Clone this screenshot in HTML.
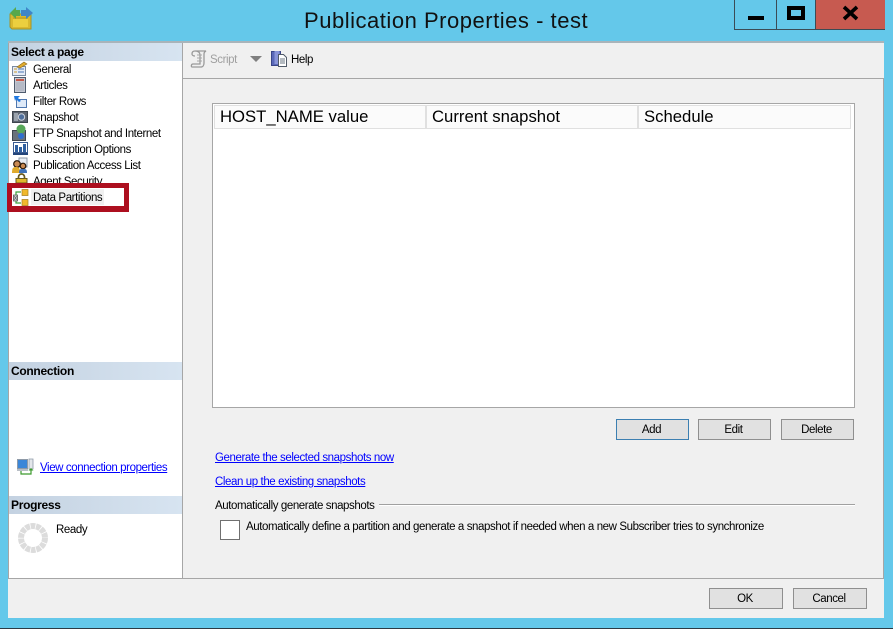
<!DOCTYPE html>
<html><head><meta charset="utf-8"><title>Publication Properties - test</title>
<style>
html,body{margin:0;padding:0}
body{width:893px;height:629px;overflow:hidden;background:#64c8ea;position:relative;font-family:"Liberation Sans",sans-serif;font-size:12px;color:#000}
.a{position:absolute}
.t{position:absolute;white-space:nowrap;line-height:16px;font-size:11.5px;letter-spacing:-.41px;margin-top:1px}
.h{position:absolute;left:9px;width:173px;height:18px;background:linear-gradient(90deg,#c4d2e1,#d7e4f1)}
.h b{position:absolute;left:2px;top:1px;line-height:16px;font-size:12px;letter-spacing:-.3px}
.btn{position:absolute;box-sizing:border-box;background:#e1e1e1;border:1px solid #8f8f8f;height:21px;line-height:21px;padding-right:2px;text-align:center;font-size:11.5px;letter-spacing:-.41px}
.link{color:#0000ff;text-decoration:underline}
.th{position:absolute;top:107px;font-size:16.7px;line-height:20px;white-space:nowrap}
svg{position:absolute;overflow:visible}
</style></head><body>
<svg style="left:9px;top:6px" width="24" height="24" viewBox="0 0 24 24"><path d="M1 8h21v15H3l-2-2z" fill="#d9b92f" stroke="#a89226"/><path d="M4 11h15v10H4z" fill="#eccf3f"/><path d="M4 11h15v2H4z" fill="#c9a926"/><path d="M1 7l6-6v3h4v6H7v3z" fill="#58a84c"/><path d="M24 7l-7-6v3h-5v6h5v3z" fill="#3f86c8"/></svg>
<div class="a" style="left:304px;top:7px;font-size:22px;line-height:27px;white-space:nowrap;letter-spacing:.52px;color:#111">Publication Properties - test</div>

<div class="a" style="left:734px;top:0;width:151px;height:30px;box-sizing:border-box;border:1px solid #3b4b55;border-top:0;border-right:0"></div>
<div class="a" style="left:776px;top:0;width:1px;height:29px;background:#3b4b55"></div>
<div class="a" style="left:815px;top:0;width:70px;height:30px;background:#c75a50;border-left:1px solid #3b4b55;border-bottom:1px solid #3b4b55;box-sizing:border-box"></div>
<div class="a" style="left:748px;top:16px;width:16px;height:4px;background:#000"></div>
<div class="a" style="left:787px;top:6px;width:18px;height:14px;box-sizing:border-box;border:4px solid #000"></div>
<svg style="left:842px;top:6px" width="17" height="14" viewBox="0 0 17 14"><path d="M2 1l13 12M15 1L2 13" stroke="#000" stroke-width="3.6" fill="none"/></svg>

<div class="a" style="left:8px;top:41px;width:876px;height:577px;background:#f0f0f0;border-top:2px solid #a9b4ba;box-sizing:border-box"></div>
<div class="a" style="left:8px;top:43px;width:175px;height:536px;background:#fff;border-left:1px solid #a6a6a6;border-right:1px solid #a6a6a6;border-bottom:1px solid #a6a6a6;box-sizing:border-box"></div>
<div class="a" style="left:182px;top:578px;width:702px;height:1px;background:#a6a6a6"></div>
<div class="a" style="left:883px;top:78px;width:1px;height:500px;background:#a6a6a6"></div>
<div class="a" style="left:183px;top:78px;width:700px;height:1px;background:#a6a6a6"></div>

<div class="h" style="top:43px"><b>Select a page</b></div>
<div class="h" style="top:362px"><b>Connection</b></div>
<div class="h" style="top:496px"><b>Progress</b></div>

<!-- page list icons -->
<svg style="left:12px;top:61px" width="16" height="15" viewBox="0 0 16 15"><path d="M.5 5.500h13v9H.5z" fill="#e6ecf6" stroke="#7b8aa0"/><path d="M2 8h3M2 11h3" stroke="#c89a30"/><path d="M6 8h6M6 11h6" stroke="#4a78b8"/><path d="M5 6l7-5 3 2-7 4z" fill="#e0aa2c" stroke="#8a6a20" stroke-width=".6"/></svg>
<svg style="left:14px;top:77px" width="12" height="16" viewBox="0 0 12 16"><path d="M.5.500h11v15H.5z" fill="#c4c8d2" stroke="#4f5c6e"/><path d="M2 2h8v2H2z" fill="#c65a4a"/><path d="M2 5h8v9H2z" fill="#b5bac6"/></svg>
<svg style="left:13px;top:95px" width="14" height="13" viewBox="0 0 14 13"><path d="M3.500 4.500h10v8h-10z" fill="#dfeaf8" stroke="#4f78b0"/><path d="M1 1h6L5 3l3 3-2 1-3-3-1 2z" fill="#1f78e0"/></svg>
<svg style="left:12px;top:110px" width="16" height="13" viewBox="0 0 16 13"><path d="M.5 1.500h15v11H.5z" fill="#5c6470" stroke="#3e454e"/><path d="M2 3h4v8H2z" fill="#9aa2ac"/><circle cx="9.500" cy="7" r="3.200" fill="#4f6f9c" stroke="#cdd3dc"/></svg>
<svg style="left:12px;top:124px" width="16" height="17" viewBox="0 0 16 17"><path d="M.5 6.500h13v10H.5z" fill="#68717c" stroke="#3e454e"/><circle cx="9" cy="5" r="4.500" fill="#58a85a"/><circle cx="9" cy="12" r="3" fill="#2f6fd0"/></svg>
<svg style="left:13px;top:142px" width="15" height="13" viewBox="0 0 15 13"><path d="M.5.500h14v10H.5z" fill="#fff" stroke="#3a5a90"/><path d="M2 3h3v7H2zM6 5h3v5H6zM10 2h3v8h-3z" fill="#2f5f9f"/><path d="M0 11h15v2H0z" fill="#24457a"/></svg>
<svg style="left:12px;top:157px" width="16" height="16" viewBox="0 0 16 16"><path d="M7 1h8v9H7z" fill="#e8edf4" stroke="#8c98a8"/><circle cx="5" cy="7" r="3.300" fill="#c98a53" stroke="#2a1808" stroke-width="1.200"/><path d="M0 16c0-5 1-6 4-6s4 1 4 6z" fill="#e0aa2c"/><circle cx="11" cy="9" r="2.800" fill="#c98a53" stroke="#2a1808" stroke-width="1.200"/><path d="M7 16c0-4 1-4 4-4s4 0 4 4z" fill="#3f72b8"/></svg>
<svg style="left:15px;top:174px" width="13" height="9" viewBox="0 0 13 9"><path d="M3.500 5V3a3 3 0 016 0v2" fill="none" stroke="#6a5a1c" stroke-width="1.700"/><path d="M1 4.500h11V9H1z" fill="#e0b82c" stroke="#6a5a1c"/></svg>

<div class="t" style="left:33px;top:61px">General</div>
<div class="t" style="left:33px;top:77px">Articles</div>
<div class="t" style="left:33px;top:93px">Filter Rows</div>
<div class="t" style="left:33px;top:109px">Snapshot</div>
<div class="t" style="left:33px;top:125px">FTP Snapshot and Internet</div>
<div class="t" style="left:33px;top:141px">Subscription Options</div>
<div class="t" style="left:33px;top:157px">Publication Access List</div>
<div class="t" style="left:33px;top:173px">Agent Security</div>

<!-- selected item with red highlight -->
<div class="a" style="left:31px;top:189px;width:73px;height:16px;background:#f0f0f0"></div>
<div class="a" style="left:7px;top:183px;width:122px;height:29px;box-sizing:border-box;border:5px solid #ad0f1f;border-bottom-width:6px"></div>
<svg style="left:12px;top:189px" width="17" height="17" viewBox="0 0 17 17"><path d="M1.500 6h4v6h-4z" fill="#c8ccd2" stroke="#555" stroke-width=".8"/><path d="M2 7l3 4M5 7l-3 4" stroke="#555" stroke-width=".6"/><path d="M4 6V3h5M4 12v2h5" fill="none" stroke="#3da03d" stroke-width="1.200"/><path d="M10 .5h6v6h-6zM10 10.500h6v6h-6z" fill="#f0b82c" stroke="#a88020" stroke-width=".7"/></svg>
<div class="t" style="left:33px;top:189px">Data Partitions</div>

<!-- connection -->
<svg style="left:17px;top:459px" width="17" height="16" viewBox="0 0 17 16"><path d="M.5.500h10v9H.5z" fill="#3b86d8" stroke="#8e9aa8"/><path d="M12 0h4v10h-4z" fill="#e3e6ea" stroke="#8e9aa8" stroke-width=".8"/><path d="M0 10h11v2H0z" fill="#b8bec6"/><path d="M4 12v3h10v-4" fill="none" stroke="#3c9a2c" stroke-width="1.200"/><path d="M11.500 11.500l2.500-2.500 2.500 2.500z" fill="#3c9a2c"/></svg>
<div class="t link" style="left:40px;top:459px">View connection properties</div>

<!-- progress -->
<svg style="left:18px;top:523px" width="30" height="30" viewBox="0 0 30 30"><circle cx="15" cy="15" r="12" fill="none" stroke="#dcdcdc" stroke-width="6" stroke-dasharray="4.600 .786"/></svg>
<div class="t" style="left:56px;top:521px">Ready</div>

<!-- toolbar -->
<svg style="left:190px;top:50px" width="18" height="18" viewBox="0 0 18 18"><path d="M5 1h11c-2 1-2 2-2 4v8c0 2-1 4-3 4H2c-1 0-1-3 1-3h7V5C10 3 9 1 5 1zM5 1C3 1 2 2 2 4c0 1 1 2 3 2" fill="#f0f0f0" stroke="#9a9a9a" stroke-width="1.300"/><path d="M7 5h5M7 8h5M7 11h5" stroke="#a8a8a8"/></svg>
<div class="t" style="left:210px;top:51px;color:#a0a0a0">Script</div>
<div class="a" style="left:250px;top:56px;width:0;height:0;border-left:6px solid transparent;border-right:6px solid transparent;border-top:6px solid #7f7f7f"></div>
<svg style="left:271px;top:50px" width="17" height="18" viewBox="0 0 17 18"><path d="M.5 1.500h9v14h-9z" fill="#5a68b8" stroke="#3a4688"/><path d="M3.500 1h5v13h-5z" fill="#8894d8"/><path d="M7.500 4.500h5l3 3v9h-8z" fill="#fff" stroke="#505a68"/><path d="M9 9h5M9 11h5M9 13h5" stroke="#6a7480"/></svg>
<div class="t" style="left:291px;top:51px">Help</div>

<!-- table -->
<div class="a" style="left:212px;top:103px;width:643px;height:305px;box-sizing:border-box;background:#fff;border:1px solid #a6a6a6"></div>
<div class="a" style="left:214px;top:105px;width:637px;height:24px;box-sizing:border-box;background:#fbfbfb;border:1px solid #e0e0e0"></div>
<div class="a" style="left:425px;top:105px;width:2px;height:24px;background:#e0e0e0"></div>
<div class="a" style="left:637px;top:105px;width:2px;height:24px;background:#e0e0e0"></div>
<div class="th" style="left:220px">HOST_NAME value</div>
<div class="th" style="left:432px">Current snapshot</div>
<div class="th" style="left:644px">Schedule</div>

<div class="btn" style="left:616px;top:419px;width:73px;border-color:#3c7fb1">Add</div>
<div class="btn" style="left:698px;top:419px;width:73px">Edit</div>
<div class="btn" style="left:781px;top:419px;width:73px">Delete</div>

<div class="t link" style="left:215px;top:449px">Generate the selected snapshots now</div>
<div class="t link" style="left:215px;top:473px">Clean up the existing snapshots</div>
<div class="t" style="left:215px;top:497px">Automatically generate snapshots</div>
<div class="a" style="left:379px;top:504px;width:476px;height:1px;background:#a0a0a0"></div>
<div class="a" style="left:379px;top:505px;width:476px;height:1px;background:#fff"></div>
<div class="a" style="left:220px;top:520px;width:20px;height:20px;box-sizing:border-box;background:#fff;border:1px solid #707070"></div>
<div class="t" style="left:246px;top:518px">Automatically define a partition and generate a snapshot if needed when a new Subscriber tries to synchronize</div>

<div class="btn" style="left:709px;top:588px;width:74px">OK</div>
<div class="btn" style="left:793px;top:588px;width:74px">Cancel</div>

<div class="a" style="left:0;top:628px;width:893px;height:1px;background:#2a3a44"></div>
</body></html>
